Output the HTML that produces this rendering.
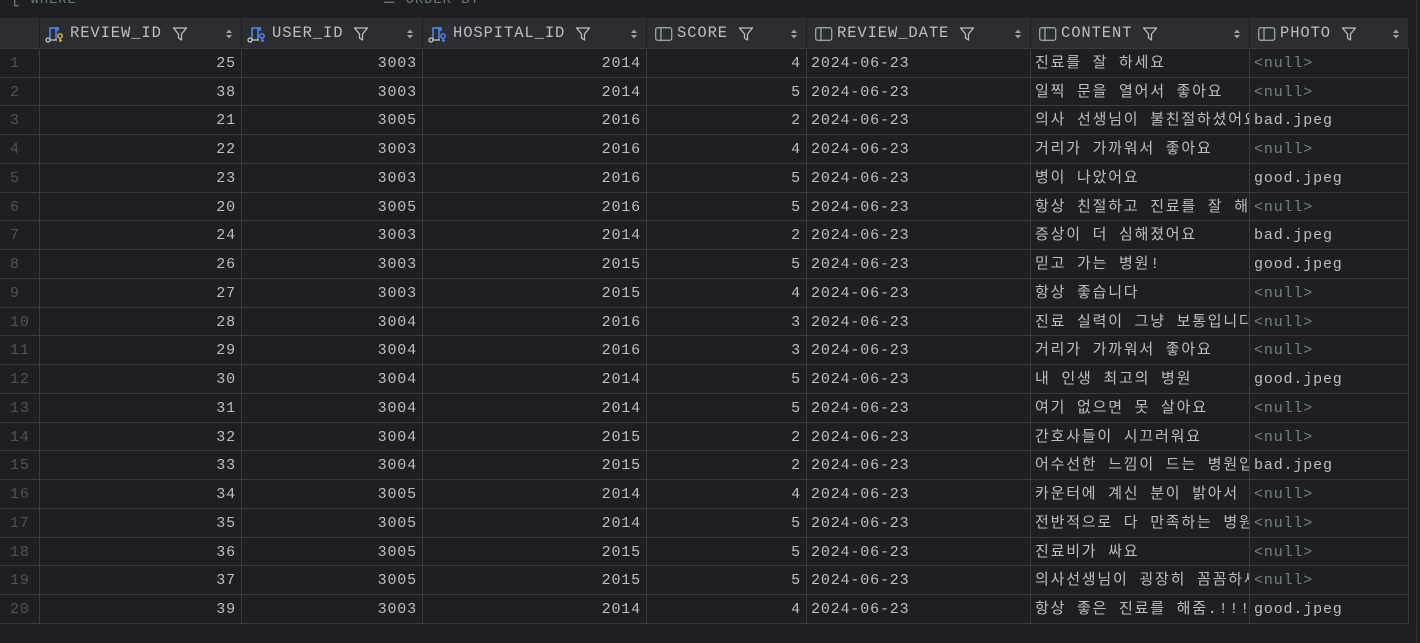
<!DOCTYPE html>
<html><head><meta charset="utf-8"><style>
*{margin:0;padding:0;box-sizing:border-box}
body{width:1420px;height:643px;background:#1e1f22;overflow:hidden;position:relative;font-family:"Liberation Mono","Noto Sans CJK KR",monospace;font-size:15px;letter-spacing:0.85px;color:#bcbec4}
.top{position:absolute;left:0;top:0;width:1420px;height:18px;background:#1e1f22;color:#6f737a;font-size:14px}
.top span{position:absolute;top:-9px}
.grid{position:absolute;left:0;top:18px;width:1409px}
.hdr{position:absolute;top:0;height:31px;background:#2b2d30;border-right:1px solid #1e1f22;border-bottom:1px solid #393b40}
.hdr .lbl{position:absolute;left:30px;top:6px;color:#bcbec4;font-size:15.5px;letter-spacing:0.9px}
.hdr svg{position:absolute}
.cell{position:absolute;height:28.74px;border-right:1px solid #393b40;border-bottom:1px solid #393b40;line-height:30px;white-space:nowrap;overflow:hidden;padding:0 4px}
.r{text-align:right;padding-right:5px}
.n{color:#4e5157;text-align:left;padding-left:10px;border-right:1px solid #393b40}
.nl{color:#7a7e85}
.sb{position:absolute;left:1416px;top:0;width:1px;height:643px;background:#2b2d30}
</style></head><body>
<div class="top"><span style="left:12px">⎣ WHERE</span><span style="left:383px">☰ ORDER BY</span></div>
<div class="grid" id="g"></div>
<div class="sb"></div>
<script>
const cols=[[0,40],[40,202],[242,181],[423,224],[647,160],[807,224],[1031,219],[1250,159]];
const names=["","REVIEW_ID","USER_ID","HOSPITAL_ID","SCORE","REVIEW_DATE","CONTENT","PHOTO"];
const data=[
[25,3003,2014,4,"진료를 잘 하세요",null],
[38,3003,2014,5,"일찍 문을 열어서 좋아요",null],
[21,3005,2016,2,"의사 선생님이 불친절하셨어요","bad.jpeg"],
[22,3003,2016,4,"거리가 가까워서 좋아요",null],
[23,3003,2016,5,"병이 나았어요","good.jpeg"],
[20,3005,2016,5,"항상 친절하고 진료를 잘 해주세요",null],
[24,3003,2014,2,"증상이 더 심해졌어요","bad.jpeg"],
[26,3003,2015,5,"믿고 가는 병원!","good.jpeg"],
[27,3003,2015,4,"항상 좋습니다",null],
[28,3004,2016,3,"진료 실력이 그냥 보통입니다",null],
[29,3004,2016,3,"거리가 가까워서 좋아요",null],
[30,3004,2014,5,"내 인생 최고의 병원","good.jpeg"],
[31,3004,2014,5,"여기 없으면 못 살아요",null],
[32,3004,2015,2,"간호사들이 시끄러워요",null],
[33,3004,2015,2,"어수선한 느낌이 드는 병원입니다","bad.jpeg"],
[34,3005,2014,4,"카운터에 계신 분이 밝아서 좋아요",null],
[35,3005,2014,5,"전반적으로 다 만족하는 병원",null],
[36,3005,2015,5,"진료비가 싸요",null],
[37,3005,2015,5,"의사선생님이 굉장히 꼼꼼하세요",null],
[39,3003,2014,4,"항상 좋은 진료를 해줌.!!!","good.jpeg"]];
let h='';
const key=c=>`<svg style="left:5px;top:7px" width="22" height="18" viewBox="0 0 22 18"><path d="M5 15V3h6v12" fill="none" stroke="#548af7" stroke-width="1.5"/><path d="M11 3h2v3" fill="none" stroke="#548af7" stroke-width="1.5"/><circle cx="3" cy="15" r="2" fill="none" stroke="#ccc" stroke-width="1.2"/><line x1="5" y1="15" x2="12" y2="15" stroke="#ccc" stroke-width="1.2"/><circle cx="15" cy="11" r="2.2" fill="none" stroke="${c}" stroke-width="1.4"/><path d="M15 13v4m0-1.5h2" stroke="${c}" stroke-width="1.4"/></svg>`;
const col=`<svg style="left:8px;top:9px" width="18" height="14" viewBox="0 0 18 14"><rect x="0.7" y="0.7" width="16" height="12.6" rx="2" fill="none" stroke="#9da0a8" stroke-width="1.3"/><line x1="6" y1="1" x2="6" y2="13" stroke="#9da0a8" stroke-width="1.3"/></svg>`;
for(let i=0;i<8;i++){
 const [x,w]=cols[i];
 let inner='';
 if(i>0){
  inner+=(i<=3?key(i==1?'#e0b33c':'#548af7'):col);
  inner+=`<span class="lbl">${names[i]}</span>`;
  const tw=names[i].length*10.2;
  inner+=`<svg style="left:${30+tw+10}px;top:8px" width="16" height="16" viewBox="0 0 16 16"><path d="M1.5 2h13l-5 6v6l-3-2V8z" fill="none" stroke="#bcbec4" stroke-width="1.3" stroke-linejoin="round"/></svg>`;
  inner+=`<svg style="left:${w-17}px;top:10px" width="8" height="12" viewBox="0 0 8 12"><path d="M1 5L4 1.5 7 5zM1 7l3 3.5L7 7z" fill="#9da0a8"/></svg>`;
 }
 h+=`<div class="hdr" style="left:${x}px;width:${w}px">${inner}</div>`;
}
const RH=28.74, T=31;
data.forEach((d,ri)=>{
 const y=T+ri*RH;
 const vals=[ri+1,d[0],d[1],d[2],d[3],"2024-06-23",d[4],d[5]];
 vals.forEach((v,ci)=>{
  const [x,w]=cols[ci];
  let cls='cell';
  if(ci==0)cls+=' n';else if(ci<5)cls+=' r';
  let txt=v;
  if(ci==7&&v===null){txt='&lt;null&gt;';cls+=' nl';}
  let st='';
  if(ci==6)st='letter-spacing:1.8px;';
  h+=`<div class="${cls}" style="left:${x}px;top:${y}px;width:${w}px;${st}">${txt}</div>`;
 });
});
document.getElementById('g').innerHTML=h;
</script>
</body></html>
